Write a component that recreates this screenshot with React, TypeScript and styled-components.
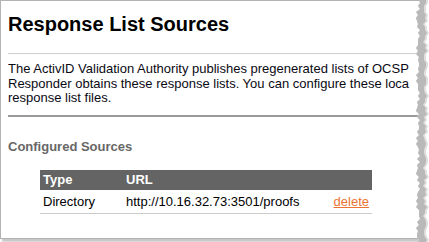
import React from 'react';
import styled, { createGlobalStyle } from 'styled-components';

const GlobalStyle = createGlobalStyle`
  html, body {
    margin: 0;
    padding: 0;
    background: #ffffff;
  }
  body {
    font-family: "Liberation Sans", Arial, sans-serif;
    color: #000;
  }
`;

interface Source {
  type: string;
  url: string;
}

const sources: Source[] = [{ type: 'Directory', url: 'http://10.16.32.73:3501/proofs' }];

// ragged right edge of the cut-out screenshot
const edgePoints = () => {
  const inner: string[] = [];
  const outer: string[] = [];
  for (let y = 0; y <= 244; y += 3) {
    const wobble = Math.round(1.4 * Math.sin(y * 0.9) + 1.1 * Math.sin(y * 2.3 + 1));
    inner.push(`${6 + wobble},${y}`);
    const w2 = Math.round(1.2 * Math.sin(y * 1.7 + 2) + 0.9 * Math.sin(y * 3.1));
    outer.push(`${13 + w2},${y}`);
  }
  return { inner, outer };
};

const TornEdge: React.FC = () => {
  const { inner, outer } = edgePoints();
  const cover = [...inner, '20,244', '20,0'].join(' ');
  const band = [...inner, ...[...outer].reverse()].join(' ');
  const halo = [...outer.map((p) => {
    const [x, y] = p.split(',').map(Number);
    return `${x + 2},${y}`;
  }), ...[...inner].reverse()].join(' ');
  return (
    <Edge width="20" height="242" viewBox="0 0 20 242">
      <polygon points={cover} fill="#ffffff" />
      <polygon points={halo} fill="#dedede" />
      <polygon points={band} fill="#b9b9b9" />
    </Edge>
  );
};

const App: React.FC = () => {
  return (
    <>
      <GlobalStyle />
      <Frame>
        <Paper>
          <Title>Response List Sources</Title>
          <ThinRule />
          <Intro>
            <Line>The ActivID Validation Authority publishes pregenerated lists of OCSP</Line>
            <Line>Responder obtains these response lists. You can configure these loca</Line>
            <Line>response list files.</Line>
          </Intro>
          <ThickRule />
          <SectionTitle>Configured Sources</SectionTitle>
          <Table>
            <thead>
              <tr>
                <HeadCell $width={83}>Type</HeadCell>
                <HeadCell>URL</HeadCell>
                <HeadCell $width={42} />
              </tr>
            </thead>
            <tbody>
              {sources.map((s) => (
                <tr key={s.url}>
                  <Cell>{s.type}</Cell>
                  <Cell>{s.url}</Cell>
                  <ActionCell>
                    <DeleteLink href="#">delete</DeleteLink>
                  </ActionCell>
                </tr>
              ))}
            </tbody>
          </Table>
        </Paper>
        <TornEdge />
      </Frame>
    </>
  );
};

export default App;

const Frame = styled.div`
  position: relative;
  width: 429px;
  height: 242px;
  overflow: hidden;
`;

const Paper = styled.div`
  box-sizing: border-box;
  width: 424px;
  height: 239px;
  border: 1px solid #b3b3b3;
  border-right: none;
  box-shadow: 2px 3px 2px rgba(0, 0, 0, 0.22);
  padding-left: 7px;
  overflow: hidden;
  background: #fff;
`;

const Title = styled.h1`
  margin: 11px 0 0 0;
  font-size: 20px;
  line-height: 24px;
  font-weight: bold;
  color: #000;
  white-space: nowrap;
`;

const ThinRule = styled.div`
  margin-top: 17px;
  height: 1px;
  background: #cfcfcf;
`;

const Intro = styled.div`
  margin-top: 8px;
  font-size: 13px;
  line-height: 14.5px;
  color: #0a0a14;
  white-space: nowrap;
`;

const Line = styled.span`
  display: block;
`;

const ThickRule = styled.div`
  margin-top: 9.5px;
  height: 2px;
  background: #9a9a9a;
`;

const SectionTitle = styled.h2`
  margin: 22px 0 0 0;
  font-size: 13px;
  line-height: 15px;
  font-weight: bold;
  color: #676767;
`;

const Table = styled.table`
  margin: 16px 0 0 32px;
  width: 332px;
  border-collapse: collapse;
  font-size: 13px;
`;

const HeadCell = styled.th<{ $width?: number }>`
  background: #646464;
  color: #fff;
  font-weight: bold;
  text-align: left;
  height: 20px;
  line-height: 20px;
  padding: 0 3px;
  width: ${({ $width }) => ($width ? `${$width}px` : 'auto')};
  box-sizing: border-box;
`;

const Cell = styled.td`
  height: 23px;
  padding: 1px 3px 0 3px;
  line-height: 22px;
  border-bottom: 1px solid #cccccc;
  color: #000;
  white-space: nowrap;
  box-sizing: border-box;
`;

const ActionCell = styled(Cell)`
  text-align: right;
`;

const DeleteLink = styled.a`
  color: #ec7433;
  text-decoration: underline;
`;

const Edge = styled.svg`
  position: absolute;
  top: 0;
  left: 412px;
  display: block;
`;
